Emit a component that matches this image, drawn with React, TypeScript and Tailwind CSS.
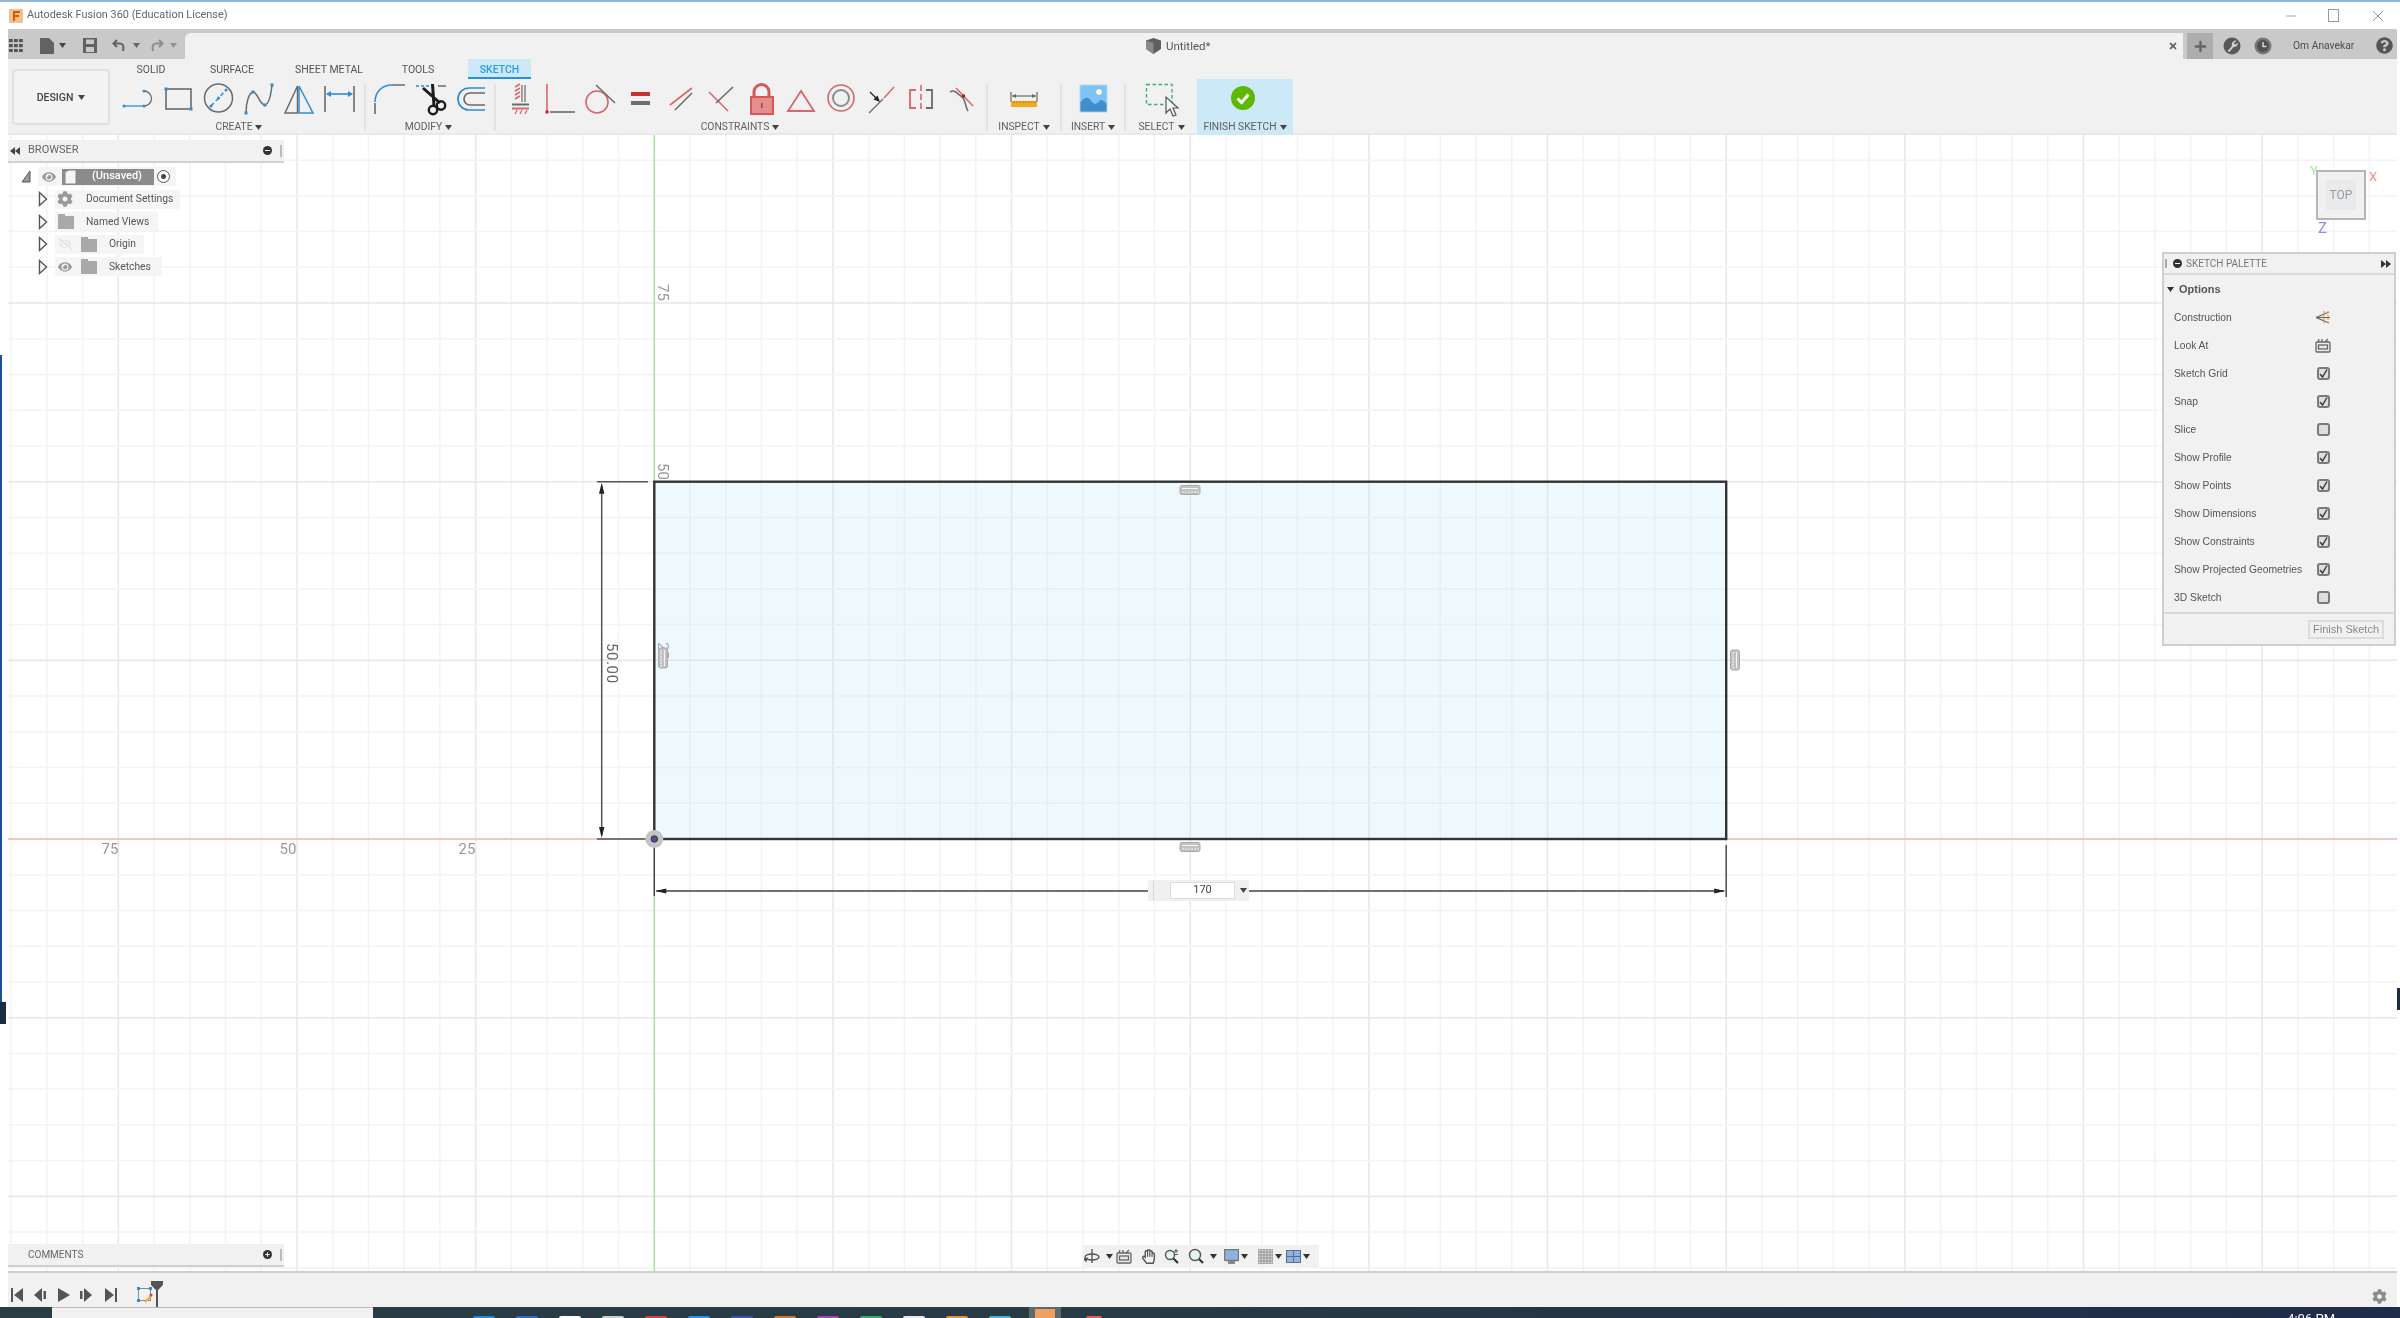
import React from 'react';
import { FaCog, FaEye, FaEyeSlash, FaQuestionCircle, FaPlus, FaRegHandPaper, FaTimes } from 'react-icons/fa';

const BLUE = '#2b8fd6';
const GRAY = '#6b6b6b';
const RED = '#d9666a';

// scene scale: 7.146px per sketch unit, origin of the sketch at (654.3, 839)
const OX = 654.3;
const OY = 839;
const UNIT = 7.146;

function Caret({ color = '#444' }: { color?: string }) {
  return (
    <svg width="7" height="5" viewBox="0 0 7 5" className="shrink-0">
      <path d="M0 0H7L3.5 5Z" fill={color} />
    </svg>
  );
}

function Ico({ children, size = 36 }: { children: React.ReactNode; size?: number }) {
  return (
    <svg width={size} height={size} viewBox={`0 0 ${size} ${size}`} fill="none" className="overflow-visible">
      {children}
    </svg>
  );
}

const createIcons = [
  <Ico key="line">
    <path d="M3 26H23" stroke={BLUE} strokeWidth="1.3" />
    <path d="M23 11A7.5 7.5 0 0 1 23 26" stroke={GRAY} strokeWidth="1.3" />
    <circle cx="3" cy="26" r="1.5" fill={BLUE} /><circle cx="23" cy="26" r="1.5" fill={BLUE} /><circle cx="23" cy="11" r="1.5" fill={BLUE} />
  </Ico>,
  <Ico key="rect">
    <rect x="5" y="9" width="25" height="20" stroke={GRAY} strokeWidth="1.6" />
    <rect x="3.5" y="7.5" width="3" height="3" fill={BLUE} /><rect x="28.5" y="27.5" width="3" height="3" fill={BLUE} />
  </Ico>,
  <Ico key="circle">
    <circle cx="17.5" cy="18" r="14" stroke={GRAY} strokeWidth="1.5" />
    <path d="M10 26L25 10" stroke={BLUE} strokeWidth="1.5" strokeDasharray="4 3" />
    <circle cx="10" cy="26" r="1.5" fill={BLUE} /><circle cx="17.5" cy="18" r="1.5" fill={BLUE} /><circle cx="25" cy="10" r="1.5" fill={BLUE} />
  </Ico>,
  <Ico key="spline">
    <path d="M5 33C5 22 8 13 12 12C16 11 19 26 24 25C28 24 30 14 31 5" stroke={GRAY} strokeWidth="1.5" />
    <rect x="3.5" y="31.5" width="3" height="3" fill={BLUE} /><rect x="10.5" y="10.5" width="3" height="3" fill={BLUE} /><rect x="22.5" y="23.5" width="3" height="3" fill={BLUE} /><rect x="29.5" y="3.5" width="3" height="3" fill={BLUE} />
  </Ico>,
  <Ico key="mirror">
    <path d="M16.5 6L4 33H16.5Z" stroke={GRAY} strokeWidth="1.5" />
    <path d="M18 6L32 33H18Z" stroke={BLUE} strokeWidth="1.5" />
  </Ico>,
  <Ico key="dim">
    <path d="M4 6V32M33 6V32" stroke={GRAY} strokeWidth="1.6" />
    <path d="M6 14H31" stroke={BLUE} strokeWidth="1.6" />
    <path d="M5 14L10 11V17ZM32 14L27 11V17Z" fill={BLUE} />
  </Ico>,
];

const modifyIcons = [
  <Ico key="fillet">
    <path d="M3 22C3 12 10 5 20 5" stroke={BLUE} strokeWidth="1.6" />
    <path d="M20 5H33M3 23V34" stroke={GRAY} strokeWidth="1.6" />
  </Ico>,
  <Ico key="trim">
    <path d="M3 6H20" stroke={BLUE} strokeWidth="1.5" strokeDasharray="3 2" />
    <path d="M25 6H33" stroke={GRAY} strokeWidth="1.5" />
    <path d="M19.5 4L21 26M10 8L27 23" stroke="#1c1c1c" strokeWidth="3" />
    <circle cx="20" cy="30" r="4.2" stroke="#1c1c1c" strokeWidth="2.4" />
    <circle cx="28" cy="25.5" r="4.2" stroke="#1c1c1c" strokeWidth="2.4" />
  </Ico>,
  <Ico key="offset">
    <path d="M32 8H16A11 11 0 0 0 16 30H32" stroke={BLUE} strokeWidth="1.7" />
    <path d="M32 13H17A6 6 0 0 0 17 25H32" stroke={GRAY} strokeWidth="1.7" />
  </Ico>,
];

const constraintIcons = [
  <Ico key="fix">
    <path d="M13 7L18 4M13 11L18 8M13 15L18 12M13 19L18 16" stroke={RED} strokeWidth="1.5" />
    <path d="M20 5V22M23 5V22" stroke={GRAY} strokeWidth="1.2" />
    <path d="M10 24.5H27" stroke={GRAY} strokeWidth="2" />
    <path d="M10 28.5H27" stroke={RED} strokeWidth="2" />
    <path d="M13 34L15 30M18 34L20 30M23 34L25 30" stroke={RED} strokeWidth="1.3" />
  </Ico>,
  <Ico key="coin">
    <path d="M5 4V32" stroke={RED} strokeWidth="1.6" />
    <path d="M8 32H33" stroke={GRAY} strokeWidth="1.6" />
    <rect x="3.5" y="30.5" width="3" height="3" fill="#c82020" />
  </Ico>,
  <Ico key="tan">
    <circle cx="15" cy="22" r="11" stroke={RED} strokeWidth="1.6" />
    <path d="M14 5L33 23" stroke={GRAY} strokeWidth="1.5" />
  </Ico>,
  <Ico key="eq">
    <rect x="9" y="12" width="19" height="4" fill="#c93030" />
    <rect x="9" y="21" width="19" height="4" fill="#6e6e6e" />
  </Ico>,
  <Ico key="par">
    <path d="M8 25L30 8" stroke={RED} strokeWidth="1.6" />
    <path d="M13 30L30 13" stroke={GRAY} strokeWidth="1.6" />
  </Ico>,
  <Ico key="perp">
    <path d="M7 12L26 31" stroke={RED} strokeWidth="1.6" />
    <path d="M14 23L31 7" stroke={GRAY} strokeWidth="1.6" />
  </Ico>,
  <Ico key="lock">
    <path d="M12 17V12A7.5 7.5 0 0 1 27 12V17" stroke="#d45a5a" strokeWidth="3" />
    <rect x="9" y="17" width="22" height="17" fill="#e38f8f" stroke="#d45a5a" strokeWidth="2" />
    <rect x="19" y="23" width="1.5" height="5" fill="#b03a3a" />
  </Ico>,
  <Ico key="tri"><path d="M19 11L6 31H32Z" stroke={RED} strokeWidth="1.8" /></Ico>,
  <Ico key="conc">
    <circle cx="19" cy="18" r="13" stroke={RED} strokeWidth="1.6" />
    <circle cx="19" cy="18" r="8" stroke="#8c8c8c" strokeWidth="2" />
  </Ico>,
  <Ico key="mid">
    <path d="M32 7L22 18" stroke={RED} strokeWidth="1.5" />
    <path d="M21 19L7 33" stroke={GRAY} strokeWidth="1.2" />
    <path d="M8 12L14 18" stroke="#222" strokeWidth="1.3" />
    <path d="M18 22L11.5 19.5L15.5 15.5Z" fill="#222" />
  </Ico>,
  <Ico key="sym">
    <path d="M14 10H8V28H14" stroke={RED} strokeWidth="1.8" />
    <path d="M19 5V32" stroke={RED} strokeWidth="1.6" strokeDasharray="6 3" />
    <path d="M24 10H30V28H24" stroke={GRAY} strokeWidth="1.8" />
  </Ico>,
  <Ico key="curv">
    <path d="M14 8L31 26" stroke={RED} strokeWidth="1.5" />
    <path d="M8 12C13 9 15 14 19 16C24 19 23 27 26 31" stroke={GRAY} strokeWidth="1.5" />
    <rect x="20" y="14.5" width="3" height="3" fill="#c81010" />
  </Ico>,
];

const inspectIcon = (
  <Ico>
    <path d="M5 12V22M31 12V22" stroke={GRAY} strokeWidth="1.2" />
    <path d="M6 16H30" stroke={GRAY} strokeWidth="1.2" />
    <path d="M6 16L10 14V18ZM30 16L26 14V18Z" fill={GRAY} />
    <rect x="5" y="21" width="26" height="6" fill="#f3a81d" />
    <path d="M8 21V23M11 21V23M14 21V23M17 21V23M20 21V23M23 21V23M26 21V23M29 21V23" stroke="#a87208" strokeWidth="0.8" />
  </Ico>
);

const insertIcon = (
  <Ico>
    <rect x="5" y="5" width="27" height="27" fill="#7cc4f7" stroke="#b9d8ee" />
    <path d="M5.5 31.5V22C9 18 11 17 13 18C16 20 18 24 20 24C23 24 25 19 27 20C29 21 31 23 31.5 24V31.5Z" fill="#3f8fcc" />
    <circle cx="24" cy="12" r="2.8" fill="#ffffd2" />
  </Ico>
);

const selectIcon = (
  <Ico>
    <rect x="3.5" y="4.5" width="25.5" height="20" stroke="#35b56a" strokeWidth="1.4" strokeDasharray="3.5 2.5" />
    <path d="M23 17V33L27 29L30 36L33 35L30 28L35 28Z" fill="#f4f4f4" stroke="#555" strokeWidth="1.2" />
  </Ico>
);

const finishIcon = (
  <Ico>
    <circle cx="16" cy="18" r="12" fill="#5cb800" />
    <path d="M10.5 18.5L14.5 22.5L21.5 14.5" stroke="#fff" strokeWidth="3" />
  </Ico>
);

function ToolLabel({ text }: { text: string }) {
  return (
    <div className="flex items-center justify-center gap-[3px] text-[10.3px] leading-none text-[#5f5f5f]">
      <span>{text}</span>
      <Caret />
    </div>
  );
}

function Sep() {
  return <div className="w-[2px] h-[47px] mt-[5px] bg-[#e3e3e3] shrink-0" />;
}

function Group({ label, icons, slot, className }: { label: string; icons: React.ReactNode[]; slot: string; className: string }) {
  return (
    <div className={`${className} shrink-0 flex flex-col`}>
      <div className="flex h-[36px] mt-[1px]">
        {icons.map((icon, i) => (
          <div key={i} className={`${slot} flex justify-center shrink-0`}>{icon}</div>
        ))}
      </div>
      <div className="mt-[6px]"><ToolLabel text={label} /></div>
    </div>
  );
}

function TopBar() {
  return (
    <div className="h-[30px] bg-[#c9c9c9] flex shrink-0">
      <div className="w-[177px] flex items-center pt-[3px] text-[#5a5a5a]">
        <svg width="14" height="13" viewBox="0 0 14 13" className="ml-[1px]" fill="#555">
          {[0, 5, 10].map(y => [0, 5, 10].map(x => <rect key={`${x}-${y}`} x={x} y={y} width="3.8" height="3.2" />))}
        </svg>
        <svg width="14" height="16" viewBox="0 0 14 16" className="ml-[17px]" fill="#626262"><path d="M0 0H9L14 5V16H0Z" /></svg>
        <span className="ml-[5px]"><Caret /></span>
        <svg width="14" height="15" viewBox="0 0 14 15" className="ml-[17px]" fill="#626262"><path fillRule="evenodd" d="M0 0H14V15H0ZM3 1.5V6H11V1.5ZM3 9V14H11V9Z" /></svg>
        <svg width="13" height="13" viewBox="0 0 13 13" className="ml-[15px]" fill="none" stroke="#626262" strokeWidth="2"><path d="M5 1L1.5 4.5L5 8M2 4.5H8C11 4.5 12 7 11 12" /></svg>
        <span className="ml-[8px]"><Caret color="#666" /></span>
        <svg width="13" height="13" viewBox="0 0 13 13" className="ml-[11px]" fill="none" stroke="#8e8e8e" strokeWidth="2"><path d="M8 1L11.5 4.5L8 8M11 4.5H5C2 4.5 1 7 2 12" /></svg>
        <span className="ml-[6px]"><Caret color="#909090" /></span>
      </div>
      <div className="flex-1 mt-[4px] bg-[#f1f1f1] rounded-tl-[6px] flex items-center">
        <svg width="15" height="16" viewBox="0 0 15 16" className="ml-[961px]"><path d="M7.5 0L15 2.5V11L7.5 16L0 11V2.5Z" fill="#5f5f5f" /><path d="M0 2.5L7.5 5V16L0 11Z" fill="#8a8a8a" /></svg>
        <span className="ml-[5px] text-[11.5px] text-[#555] pt-[2px]">Untitled*</span>
        <FaTimes className="ml-auto mr-[5px] text-[#666]" size={10} />
      </div>
      <div className="w-[214px] flex items-center text-[#555]">
        <div className="ml-[4px] w-[26px] h-[26px] mt-[4px] bg-[#adadad] flex items-center justify-center"><FaPlus size={13} color="#666" /></div>
        <svg width="18" height="18" viewBox="0 0 18 18" className="ml-[10px] mt-[3px]"><circle cx="9" cy="9" r="8.5" fill="#585858" /><path d="M4.5 14L9 9C8 6 10 3.5 13.5 3.5L11 6.2L12.5 7.8L15 5.5C15 9 12.5 10.5 10.5 10L6.5 15Z" fill="#cfcfcf" /></svg>
        <svg width="18" height="18" viewBox="0 0 18 18" className="ml-[13px] mt-[3px]"><circle cx="9" cy="9" r="8.5" fill="#777" /><circle cx="9" cy="9" r="6" fill="#4f4f4f" /><path d="M9 5V9.5H12.5" stroke="#d8d8d8" strokeWidth="1.5" fill="none" /></svg>
        <span className="ml-[21px] mt-[3px] w-[61px] text-[10.3px] text-[#4d4d4d] whitespace-nowrap">Om Anavekar</span>
        <FaQuestionCircle className="ml-[22px] mt-[3px]" size={17} color="#555" />
      </div>
    </div>
  );
}

const tabs = [
  { name: 'SOLID', w: 'w-[60px]' },
  { name: 'SURFACE', w: 'w-[102px]' },
  { name: 'SHEET METAL', w: 'w-[92px]' },
  { name: 'TOOLS', w: 'w-[86px]' },
];

function Ribbon() {
  return (
    <div className="h-[76px] bg-[#f1f1f1] border-b-2 border-[#e9e9e9] flex shrink-0">
      <div className="ml-[4px] mt-[10px] w-[98px] h-[56px] shrink-0 bg-[#f3f3f3] border-2 border-[#e0e0e0] rounded-[4px] flex items-center justify-center gap-[5px] text-[10.5px] text-[#444] font-medium pt-[1px]">
        DESIGN <Caret />
      </div>
      <div className="flex-1 flex flex-col ml-[4px]">
        <div className="h-[20px] flex items-center shrink-0 text-[10.5px] text-[#555]">
          <div className="w-[7px]" />
          {tabs.map(t => (
            <div key={t.name} className={`${t.w} text-center pt-[2px]`}>{t.name}</div>
          ))}
          <div className="ml-[7px] w-[63px] h-[20px] bg-[#cde8f6] border-b-[2px] border-[#1e96dc] text-center text-[#2aa0dc] font-medium leading-[21px]">SKETCH</div>
        </div>
        <div className="flex">
          <div className="w-[5px]" />
          <Group label="CREATE" icons={createIcons} slot="w-[40px]" className="w-[245px] pr-[5px]" />
          <Sep />
          <Group label="MODIFY" icons={modifyIcons} slot="w-[40.5px]" className="w-[128px] pl-[4px] pr-[7px]" />
          <Sep />
          <Group label="CONSTRAINTS" icons={constraintIcons} slot="w-[40px]" className="w-[490px] pl-[4px] pr-[6px]" />
          <Sep />
          <Group label="INSPECT" icons={[inspectIcon]} slot="w-[72px]" className="w-[72px]" />
          <Sep />
          <Group label="INSERT" icons={[insertIcon]} slot="w-[62px]" className="w-[62px]" />
          <Sep />
          <Group label="SELECT" icons={[selectIcon]} slot="w-[70px]" className="w-[71px]" />
          <div className="w-[96px] h-[56px] bg-[#cde8f6] shrink-0 flex flex-col">
            <div className="h-[36px] mt-[1px] flex justify-center">{finishIcon}</div>
            <div className="mt-[6px]"><ToolLabel text="FINISH SKETCH" /></div>
          </div>
        </div>
      </div>
    </div>
  );
}

function Handle({ x, y, vertical }: { x: number; y: number; vertical?: boolean }) {
  return (
    <g transform={`translate(${x} ${y})${vertical ? ' rotate(90)' : ''}`}>
      <rect x="-10" y="-4.5" width="20" height="9" rx="2" fill="#c2c2c2" stroke="#aaa" />
      <path d="M-8 -1.5H8" stroke="#f4f4f4" />
      <path d="M-7 3V1M-4 3V1M-1 3V1M2 3V1M5 3V1M8 3V1" stroke="#eee" />
    </g>
  );
}

function Scene() {
  const xs: number[] = [];
  const ys: number[] = [];
  for (let i = -18; i <= 50; i++) xs.push(i);
  for (let i = -12; i <= 20; i++) ys.push(i);
  const right = OX + 150 * UNIT;
  const top = OY - 50 * UNIT;
  return (
    <svg className="absolute inset-0" width="2389" height="1136" viewBox="8 135 2389 1136">
      {xs.map(i => (
        <line key={`v${i}`} x1={OX + i * 5 * UNIT} x2={OX + i * 5 * UNIT} y1="135" y2="1271" stroke={i % 5 === 0 ? '#e7e7e7' : '#f3f3f3'} strokeWidth="1.5" />
      ))}
      {ys.map(i => (
        <line key={`h${i}`} x1="8" x2="2397" y1={OY - i * 5 * UNIT} y2={OY - i * 5 * UNIT} stroke={i % 5 === 0 ? '#e7e7e7' : '#f3f3f3'} strokeWidth="1.5" />
      ))}
      <line x1={OX} x2={OX} y1="135" y2="1271" stroke="#a8ea9c" strokeWidth="1.5" />
      <line x1="8" x2="2397" y1={OY} y2={OY} stroke="#f4b9b9" strokeWidth="1.5" />
      {[['75', 292], ['50', 471], ['25', 650]].map(([t, y]) => (
        <text key={t} x="-8" y="0" transform={`translate(658 ${y}) rotate(90)`} fontSize="15" fill="#999">{t}</text>
      ))}
      {[['75', 110], ['50', 288], ['25', 467]].map(([t, x]) => (
        <text key={t} x={x} y="854" textAnchor="middle" fontSize="15" fill="#999">{t}</text>
      ))}
      <rect x={OX} y={top} width={150 * UNIT} height={50 * UNIT} fill="#bce6f6" fillOpacity="0.25" stroke="#333" strokeWidth="2.4" />
      {/* vertical dimension */}
      <path d={`M597 ${top}H648M597 ${OY}H${OX}M601.7 ${top + 4}V${OY - 4}`} stroke="#555" strokeWidth="1.5" />
      <path d={`M601.7 ${top + 1}L599 ${top + 12}H604.4ZM601.7 ${OY - 1}L599 ${OY - 12}H604.4Z`} fill="#222" />
      <text x="0" y="0" transform="translate(607 643) rotate(90)" fontSize="15" letterSpacing="0.6" fill="#666">50.00</text>
      {/* horizontal dimension */}
      <path d={`M${OX} ${OY}V896M${right} 845V897`} stroke="#444" strokeWidth="1.4" />
      <path d={`M${OX + 2} 891H1148M1248 891H${right - 2}`} stroke="#444" strokeWidth="1.5" />
      <path d={`M${OX + 1} 891L${OX + 12} 888.5V893.5ZM${right - 1} 891L${right - 12} 888.5V893.5Z`} fill="#222" />
      <Handle x={1190} y={490} />
      <Handle x={1190} y={847} />
      <Handle x={1735} y={660} vertical />
      <Handle x={663} y={658} vertical />
      <circle cx={OX} cy={OY} r="9" fill="#c4c4c4" />
      <circle cx={OX} cy={OY} r="3.2" fill="#5a4a9c" stroke="#333" />
    </svg>
  );
}

function TreeToggle() {
  return (
    <svg width="10" height="16" viewBox="0 0 10 16" className="shrink-0">
      <path d="M1.5 1.5L8.5 8L1.5 14.5Z" fill="#fff" stroke="#555" strokeWidth="1.4" />
    </svg>
  );
}

function FolderIcon() {
  return (
    <svg width="16" height="15" viewBox="0 0 16 15" className="shrink-0">
      <path d="M0 0H7V2H16V15H0Z" fill="#a9a9a9" />
    </svg>
  );
}

function BrowserPanel() {
  return (
    <div className="absolute left-0 top-[5px] w-[276px]">
      <div className="h-[23px] bg-[#f1f1f1] border-b-2 border-[#d0d0d0] flex items-center text-[11px] text-[#666]">
        <svg width="10" height="8" viewBox="0 0 10 8" className="ml-[2px]" fill="#444"><path d="M5 0V8L0 4ZM10 0V8L5 4Z" /></svg>
        <span className="ml-[8px]">BROWSER</span>
        <span className="ml-auto w-[9px] h-[9px] rounded-full bg-[#333] flex items-center justify-center"><span className="w-[5px] h-[1.5px] bg-white" /></span>
        <span className="ml-[8px] mr-[2px] w-[2px] h-[12px] bg-[#bbb]" />
      </div>
      <div className="mt-[4px] flex flex-col gap-[3.5px] text-[10.3px] text-[#555]">
        <div className="flex items-center ml-[13px] h-[19px]">
          <svg width="10" height="13" viewBox="0 0 10 13" className="shrink-0"><path d="M9 1V12H1Z" fill="#9a9a9a" stroke="#555" /></svg>
          <div className="ml-[7px] w-[138px] h-[19px] bg-[#f5f5f5] flex items-center">
            <FaEye className="ml-[4px]" size={14} color="#999" />
            <div className="ml-[6px] w-[92px] h-[16px] bg-[#8b8b8b] flex items-center text-white text-[11px]">
              <svg width="16" height="16" viewBox="0 0 16 16" className="ml-[1px]"><path d="M2 3L6 1H13V15H2Z" fill="#f4f4f4" stroke="#888" /></svg>
              <span className="ml-[13px] font-medium">(Unsaved)</span>
            </div>
            <span className="ml-[3px] w-[13px] h-[13px] rounded-full border border-[#555] bg-white flex items-center justify-center"><span className="w-[5px] h-[5px] rounded-full bg-[#444]" /></span>
          </div>
        </div>
        <div className="flex items-center ml-[30px] h-[19px]">
          <TreeToggle />
          <div className="ml-[7px] w-[125px] h-[19px] bg-[#f5f5f5] flex items-center">
            <FaCog className="ml-[2px]" size={16} color="#999" />
            <span className="ml-[13px] whitespace-nowrap">Document Settings</span>
          </div>
        </div>
        <div className="flex items-center ml-[30px] h-[19px]">
          <TreeToggle />
          <div className="ml-[7px] w-[103px] h-[19px] bg-[#f5f5f5] flex items-center">
            <span className="ml-[3px]"><FolderIcon /></span>
            <span className="ml-[12px] whitespace-nowrap">Named Views</span>
          </div>
        </div>
        <div className="flex items-center ml-[30px] h-[19px]">
          <TreeToggle />
          <div className="ml-[7px] w-[89px] h-[19px] bg-[#f5f5f5] flex items-center">
            <FaEyeSlash className="ml-[3px]" size={14} color="#e4e4e4" />
            <span className="ml-[9px]"><FolderIcon /></span>
            <span className="ml-[12px]">Origin</span>
          </div>
        </div>
        <div className="flex items-center ml-[30px] h-[19px]">
          <TreeToggle />
          <div className="ml-[7px] w-[107px] h-[19px] bg-[#f5f5f5] flex items-center">
            <FaEye className="ml-[3px]" size={14} color="#999" />
            <span className="ml-[9px]"><FolderIcon /></span>
            <span className="ml-[12px]">Sketches</span>
          </div>
        </div>
      </div>
    </div>
  );
}

function CommentsPanel() {
  return (
    <div className="absolute left-0 bottom-[4px] w-[276px] h-[23px] bg-[#f1f1f1] border-b-2 border-[#d0d0d0] flex items-center text-[10px] text-[#666]">
      <span className="ml-[20px]">COMMENTS</span>
      <span className="ml-auto w-[9px] h-[9px] rounded-full bg-[#333] flex items-center justify-center text-white"><FaPlus size={5} /></span>
      <span className="ml-[8px] mr-[2px] w-[2px] h-[12px] bg-[#bbb]" />
    </div>
  );
}

function NavCube() {
  return (
    <div className="absolute left-[2302px] top-[26px] w-[72px] h-[76px] text-[13px]">
      <span className="absolute left-[0px] top-[0px] text-[#9de89a]">Y</span>
      <span className="absolute left-[59px] top-[6px] text-[#f58a8a]">X</span>
      <span className="absolute left-[8px] top-[56px] text-[15px] text-[#8a8aee]">Z</span>
      <div className="absolute left-[6px] top-[9px] w-[50px] h-[50px] bg-[#f1f1f1] border-2 border-[#b5b5b5] flex items-center justify-center">
        <div className="w-[30px] h-[30px] bg-[#e8eaec] flex items-center justify-center text-[12px] text-[#9a9a9a]">TOP</div>
      </div>
    </div>
  );
}

function LookAtIcon() {
  return (
    <svg width="16" height="15" viewBox="0 0 16 15" fill="none" stroke="#666" strokeWidth="1.3">
      <rect x="1" y="4" width="14" height="10" rx="1" fill="#eee" />
      <rect x="3.5" y="7" width="9" height="4" fill="#dfe8f0" />
      <path d="M3 4L4 1M7 4V1M10 4L13 1" />
    </svg>
  );
}

const paletteRows: { label: string; checked?: boolean; icon?: React.ReactNode }[] = [
  {
    label: 'Construction',
    icon: (
      <svg width="16" height="15" viewBox="0 0 16 15" fill="none" strokeWidth="1.2">
        <path d="M1 7.5L14 2M1 7.5H15M1 7.5L14 13" stroke="#666" />
        <path d="M9 1V14M13 1V14" stroke="#f0a030" strokeDasharray="2 1.5" />
      </svg>
    ),
  },
  { label: 'Look At', icon: <LookAtIcon /> },
  { label: 'Sketch Grid', checked: true },
  { label: 'Snap', checked: true },
  { label: 'Slice', checked: false },
  { label: 'Show Profile', checked: true },
  { label: 'Show Points', checked: true },
  { label: 'Show Dimensions', checked: true },
  { label: 'Show Constraints', checked: true },
  { label: 'Show Projected Geometries', checked: true },
  { label: '3D Sketch', checked: false },
];

function CheckBox({ checked }: { checked?: boolean }) {
  return (
    <span className="w-[13px] h-[13px] rounded-[3px] border-2 border-[#7a7a7a] bg-[#dedede] flex items-center justify-center">
      {checked && (
        <svg width="9" height="9" viewBox="0 0 9 9" fill="none" stroke="#333" strokeWidth="1.4" className="shrink-0">
          <path d="M1 5L3.5 8L8 0.5" />
        </svg>
      )}
    </span>
  );
}

function SketchPalette() {
  return (
    <div className="absolute left-[2154px] top-[117px] w-[234px] h-[394px] bg-[#f1f1f1] border-2 border-[#cfcfcf] flex flex-col font-['Liberation_Sans',sans-serif]">
      <div className="h-[21px] border-b-2 border-[#d8d8d8] flex items-center text-[10px] text-[#777] shrink-0">
        <span className="ml-[1px] w-[2px] h-[9px] bg-[#aaa]" />
        <span className="ml-[6px] w-[9px] h-[9px] rounded-full bg-[#333] flex items-center justify-center"><span className="w-[5px] h-[1.5px] bg-white" /></span>
        <span className="ml-[4px] font-['Roboto',sans-serif]">SKETCH PALETTE</span>
        <svg width="10" height="8" viewBox="0 0 10 8" className="ml-auto mr-[3px]" fill="#333"><path d="M0 0V8L5 4ZM5 0V8L10 4Z" /></svg>
      </div>
      <div className="h-[29px] flex items-center shrink-0 text-[11px] font-bold text-[#555]">
        <span className="ml-[3px]"><Caret color="#333" /></span>
        <span className="ml-[5px]">Options</span>
      </div>
      <div className="flex flex-col text-[10.3px] text-[#555]">
        {paletteRows.map(r => (
          <div key={r.label} className="h-[28px] flex items-center pl-[10px]">
            <span className="w-[141px] whitespace-nowrap">{r.label}</span>
            <span className="w-[16px] flex justify-center -mt-[2px]">{r.icon ?? <CheckBox checked={r.checked} />}</span>
          </div>
        ))}
      </div>
      <div className="mt-auto h-[33px] border-t-2 border-[#d8d8d8] flex items-center justify-end pr-[10px] shrink-0">
        <div className="w-[76px] h-[19px] border-2 border-[#dcdcdc] text-[11px] text-[#888] flex items-center justify-center">Finish Sketch</div>
      </div>
    </div>
  );
}

function DimInput() {
  return (
    <div className="absolute left-[1140px] top-[745px] w-[101px] h-[21px] bg-[#f0f0f0] flex items-center text-[11px] text-[#444]">
      <span className="ml-[5px] w-[3px] h-[19px] border-l border-dotted border-[#bbb]" />
      <div className="ml-[14px] w-[65px] h-[17px] bg-white border border-[#ddd] flex items-center justify-center">170</div>
      <span className="ml-[5px]"><Caret /></span>
    </div>
  );
}

function NavBar() {
  return (
    <div className="absolute left-[1075px] top-[1110px] w-[236px] h-[22px] bg-[#f1f1f1] flex items-center text-[#666]">
      <svg width="16" height="16" viewBox="0 0 16 16" fill="none" stroke="#555" strokeWidth="1.4" className="ml-[1px]">
        <ellipse cx="8" cy="9" rx="7" ry="3" />
        <path d="M8 1V15" />
        <path d="M2 13L0 11L3 10.5Z" fill="#333" />
      </svg>
      <span className="ml-[6px]"><Caret color="#333" /></span>
      <span className="ml-[3px]"><LookAtIcon /></span>
      <FaRegHandPaper className="ml-[9px]" size={15} color="#555" />
      <svg width="16" height="16" viewBox="0 0 16 16" fill="none" stroke="#555" strokeWidth="1.4" className="ml-[8px]">
        <circle cx="6" cy="7" r="4.5" fill="#e6f2f2" />
        <path d="M9.5 10.5L14 15" strokeWidth="2.2" stroke="#333" />
        <path d="M12 1V5M10 3H14M10 6.5H14" strokeWidth="1" />
      </svg>
      <svg width="16" height="16" viewBox="0 0 16 16" fill="none" stroke="#555" strokeWidth="1.4" className="ml-[8px]">
        <circle cx="7" cy="7" r="5.5" fill="#e6f2f2" />
        <path d="M11 11L15 15" strokeWidth="2.2" stroke="#333" />
      </svg>
      <span className="ml-[6px]"><Caret color="#333" /></span>
      <svg width="15" height="15" viewBox="0 0 15 15" className="ml-[7px]"><rect x="0.5" y="0.5" width="14" height="11" rx="1" fill="#8fb3de" stroke="#777" strokeWidth="1.5" /><rect x="4" y="12" width="7" height="3" fill="#888" /></svg>
      <span className="ml-[2px]"><Caret color="#333" /></span>
      <svg width="15" height="15" viewBox="0 0 15 15" className="ml-[10px]" fill="#d4d4d4" stroke="#777" strokeWidth="0.6">
        <rect x="0" y="0" width="15" height="15" />
        <path d="M3 0V15M6 0V15M9 0V15M12 0V15M0 3H15M0 6H15M0 9H15M0 12H15" />
      </svg>
      <span className="ml-[2px]"><Caret color="#333" /></span>
      <svg width="15" height="13" viewBox="0 0 15 13" className="ml-[4px]" fill="#8fb3de" stroke="#566e90"><rect x="0.5" y="0.5" width="14" height="12" /><path d="M7.5 0V13M0 6.5H15" /></svg>
      <span className="ml-[2px]"><Caret color="#333" /></span>
    </div>
  );
}

function Timeline() {
  return (
    <div className="relative h-[36px] bg-[#f1f1f1] border-t-2 border-[#cfcfcf] flex items-start pt-[15px] shrink-0">
      <svg width="12" height="14" viewBox="0 0 12 14" className="ml-[3px]" fill="#555"><path d="M0 0H2V14H0ZM12 0V14L3 7Z" /></svg>
      <svg width="12" height="14" viewBox="0 0 12 14" className="ml-[11px]" fill="#555"><path d="M8 0V14L0 7ZM9.5 3H12V11H9.5Z" /></svg>
      <svg width="12" height="14" viewBox="0 0 12 14" className="ml-[12px]" fill="#555"><path d="M0 0L12 7L0 14Z" /></svg>
      <svg width="12" height="14" viewBox="0 0 12 14" className="ml-[10px]" fill="#555"><path d="M4 0V14L12 7ZM0 3H2.5V11H0Z" /></svg>
      <svg width="12" height="14" viewBox="0 0 12 14" className="ml-[13px]" fill="#555"><path d="M0 0V14L9 7ZM10 0H12V14H10Z" /></svg>
      <svg width="16" height="16" viewBox="0 0 16 16" className="ml-[20px] -mt-[1px]" fill="none">
        <rect x="1.5" y="1.5" width="12" height="12" stroke="#888" />
        <rect x="0" y="0" width="3" height="3" fill={BLUE} /><rect x="12" y="0" width="3" height="3" fill={BLUE} /><rect x="0" y="12" width="3" height="3" fill={BLUE} />
        <path d="M8 15L14 9" stroke="#f0b040" strokeWidth="2.4" />
        <circle cx="14" cy="8" r="1.6" fill="#e04040" />
      </svg>
      <svg width="12" height="26" viewBox="0 0 12 26" className="absolute left-[143px] top-[8px]">
        <path d="M0 0H12V4L7 9V26H5V9L0 4Z" fill="#555" />
      </svg>
      <FaCog className="ml-auto mr-[10px] mt-[1px]" size={15} color="#8c8c8c" />
    </div>
  );
}

const taskTips = ['#1e88e5', '#2c6fc0', '#fafafa', '#cccccc', '#d9423e', '#2196f3', '#3f51b5', '#d4752a', '#b040b0', '#2eae6a', '#e8e8e8', '#e0962a', '#46b7d8'];

function TaskBar() {
  return (
    <div className="h-[11px] shrink-0 flex bg-[linear-gradient(90deg,#2a3c44,#283a44_50%,#1f2b4a)] overflow-hidden">
      <div className="w-[52px]" />
      <div className="w-[321px] bg-[#f1f1f1] border-t border-[#bbb]" />
      <div className="ml-[100px] flex">
        {taskTips.map((c, i) => (
          <div key={i} className="w-[43px] h-full flex items-end">
            <div className="w-[22px] h-[2px] rounded-t-full" style={{ backgroundColor: c }} />
          </div>
        ))}
      </div>
      <div className="ml-[-3px] w-[32px] h-full bg-[#5c6a6e] flex items-start justify-center pt-[2px]"><div className="w-[20px] h-full bg-[#f0a060]" /></div>
      <div className="ml-[25px] mt-[9px] w-[16px] h-[2px] rounded-t-full bg-[#e65a5a]" />
      <div className="ml-auto mr-[65px] pt-[5px] text-[13px] leading-none text-white whitespace-nowrap">4:06 PM</div>
    </div>
  );
}

export default function App() {
  return (
    <div className="relative w-[2400px] h-[1318px] overflow-hidden bg-white flex flex-col font-['Roboto',sans-serif] blur-[0.5px]">
      <div className="h-[29px] shrink-0 border-t-2 border-[#8fb8d8] flex items-center text-[10.9px] text-[#666]">
        <svg width="14" height="14" viewBox="0 0 14 14" className="ml-[9px]">
          <rect width="14" height="14" fill="#f6c08a" />
          <path d="M4 2H11V4H6V6H10V8H6V12H4Z" fill="#d05a10" />
        </svg>
        <span className="ml-[4px]">Autodesk Fusion 360 (Education License)</span>
        <svg width="12" height="12" viewBox="0 0 12 12" className="ml-auto" fill="none" stroke="#aaa">
          <path d="M1 6H11" />
        </svg>
        <svg width="11" height="13" viewBox="0 0 11 13" className="ml-[31px]" fill="none" stroke="#999"><rect x="0.5" y="0.5" width="10" height="12" /></svg>
        <svg width="12" height="12" viewBox="0 0 12 12" className="ml-[33px] mr-[16px]" fill="none" stroke="#999"><path d="M1 1L11 11M11 1L1 11" /></svg>
      </div>
      <div className="flex-1 flex flex-col pl-[8px] pr-[3px] min-h-0">
        <TopBar />
        <Ribbon />
        <div className="relative flex-1 overflow-hidden">
          <Scene />
          <BrowserPanel />
          <CommentsPanel />
          <NavCube />
          <SketchPalette />
          <DimInput />
          <NavBar />
        </div>
        <Timeline />
      </div>
      <TaskBar />
      <div className="absolute left-0 top-[355px] w-[2px] h-[665px] bg-[#1c4fa0]" />
      <div className="absolute left-0 top-[1002px] w-[6px] h-[22px] bg-[#1f2b44]" />
      <div className="absolute right-0 top-[988px] w-[3px] h-[22px] bg-[#1f2b44]" />
    </div>
  );
}
